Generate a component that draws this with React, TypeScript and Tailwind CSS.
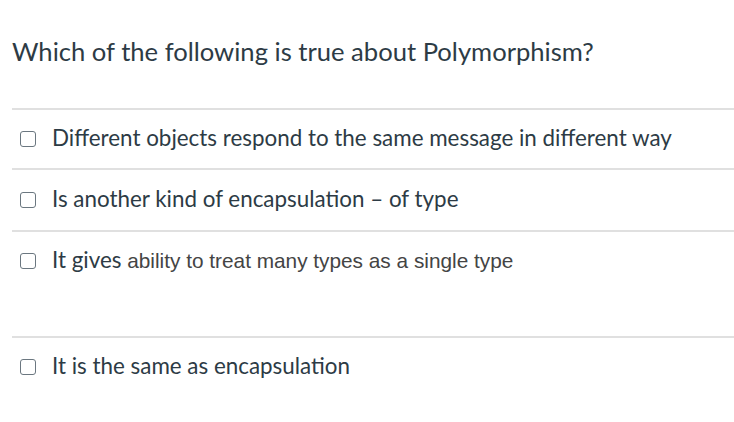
import React from "react";

const lato = { fontFamily: "Lato, 'Noto Sans', sans-serif" };

function Box() {
  return (
    <span className="inline-block w-[16px] h-[16px] shrink-0 rounded-[3px] border-[1.5px] border-[#6b7780] bg-white" />
  );
}

function Row({ children, h, extra }: { children: React.ReactNode; h: string; extra?: boolean }) {
  return (
    <div className="border-t-2 border-[#e0e0e0]">
      <div className={"flex items-center pl-[8px] " + h}>
        <Box />
        <div className="ml-[16px] -mt-[2px] text-[22.4px] leading-[30px] text-[#2d3b45] whitespace-nowrap">{children}</div>
      </div>
      {extra && <div className="h-[46px]" />}
    </div>
  );
}

export default function App() {
  return (
    <div className="w-[734px] h-[422px] bg-white overflow-hidden" style={lato}>
      <div className="pl-[12px] pr-0">
        <div className="pt-[33px] h-[108px] text-[25.6px] leading-[36px] text-[#2d3b45]">
          Which of the following is true about Polymorphism?
        </div>
        <Row h="h-[58px]">Different objects respond to the same message in different way</Row>
        <Row h="h-[60px]">Is another kind of encapsulation – of type</Row>
        <Row h="h-[58px]" extra>
          It gives{" "}
          <span className="text-[20.8px] text-[#444]" style={{ fontFamily: "'Liberation Sans', Arial, sans-serif" }}>
            ability to treat many types as a single type
          </span>
        </Row>
        <Row h="h-[58px]">It is the same as encapsulation</Row>
      </div>
    </div>
  );
}
